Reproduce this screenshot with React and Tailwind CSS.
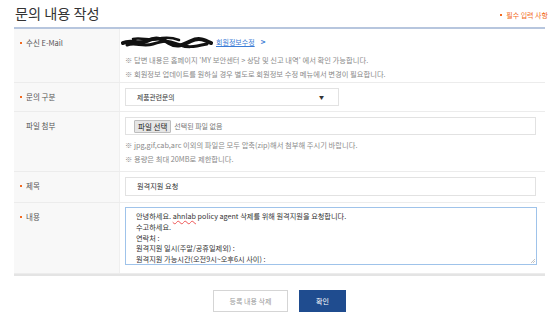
const Dot = () => <span className="inline-block w-[2px] h-[2px] bg-[#f26a21] mr-[4px] align-middle relative -top-[1px]" />;

function Row({ label, required, height, children }) {
  return (
    <div className="flex border-b border-[#ececec]" style={{ height }}>
      <div className="w-[106px] shrink-0 bg-[#f8f8f8] border-r border-[#efefef] pl-[6px] pt-[9px] text-[7.5px] leading-[10px] text-[#555]">
        {required ? <Dot /> : <span className="inline-block w-[6px]" />}
        {label}
      </div>
      <div className="flex-1 pl-[5px]">{children}</div>
    </div>
  );
}

function Note({ children }) {
  return <p className="text-[7.3px] leading-[14px] text-[#8a8a8a] whitespace-nowrap">※ {children}</p>;
}

function Scribble() {
  return (
    <svg width="92" height="14" viewBox="0 0 92 14" className="shrink-0">
      <path d="M2 8 C10 4 18 10 26 6 S40 3 48 8 S62 10 70 6 S84 5 90 8" stroke="#111" strokeWidth="4" fill="none" strokeLinecap="round" />
      <path d="M6 10 C14 7 22 12 32 9 S46 5 56 9 S72 12 86 9" stroke="#111" strokeWidth="3" fill="none" strokeLinecap="round" />
      <path d="M12 4 C20 2 28 6 36 4 S50 2 58 5" stroke="#111" strokeWidth="2.5" fill="none" strokeLinecap="round" />
    </svg>
  );
}

export default function App() {
  return (
    <div className="w-[550px] h-[314px] overflow-hidden bg-white font-['Noto_Sans_CJK_KR','Noto_Sans',sans-serif] text-[#444]">
      <div className="pl-[14px] pr-[5px]">
        {/* header */}
        <div className="h-[27px] flex items-start justify-between">
          <h2 className="pt-[4px] pl-[1px] text-[14.2px] leading-[18px] text-[#333]">문의 내용 작성</h2>
          <p className="pt-[10px] -mr-[3px] text-[7px] leading-[10px] text-[#f26a21] whitespace-nowrap">
            <Dot />필수 입력 사항
          </p>
        </div>
        <div className="h-[2px] bg-[#b7c6de]" />

        <Row label="수신 E-Mail" required height={54}>
          <div className="flex items-center h-[14px] mt-[6px] -ml-[4px]">
            <Scribble />
            <a className="ml-[3px] text-[7px] leading-[10px] text-[#3a7bd5] underline">회원정보수정</a>
            <span className="ml-[6px] text-[8px] leading-[10px] text-[#3a7bd5] font-bold">&gt;</span>
          </div>
          <div className="mt-[4px]">
            <Note>답변 내용은 홈페이지 'MY 보안센터 &gt; 상담 및 신고 내역' 에서 확인 가능합니다.</Note>
            <Note>회원정보 업데이트를 원하실 경우 별도로 회원정보 수정 메뉴에서 변경이 필요합니다.</Note>
          </div>
        </Row>

        <Row label="문의 구분" required height={29}>
          <div className="mt-[5px] w-[214px] h-[18px] border border-[#e2e2e2] flex items-center justify-between pl-[11px] pr-[14px] text-[6.8px] text-[#333]">
            <span>제품관련문의</span>
            <span className="text-[5px]">▼</span>
          </div>
        </Row>

        <Row label="파일 첨부" height={60}>
          <div className="mt-[5px] w-[411px] h-[18px] border border-[#e2e2e2] flex items-center pl-[8px]">
            <span className="h-[13px] px-[3px] bg-[#e6e6e6] border border-[#bdbdbd] rounded-[1px] text-[7.5px] leading-[11px] text-[#222]">파일 선택</span>
            <span className="ml-[3px] text-[7px] text-[#777]">선택된 파일 없음</span>
          </div>
          <div className="mt-[3px]">
            <Note>jpg,gif,cab,arc 이외의 파일은 모두 압축(zip)해서 첨부해 주시기 바랍니다.</Note>
            <Note>용량은 최대 20MB로 제한합니다.</Note>
          </div>
        </Row>

        <Row label="제목" required height={31}>
          <div className="mt-[5px] w-[411px] h-[19px] border border-[#e2e2e2] flex items-center pl-[11px] text-[7.2px] text-[#333]">
            원격지원 요청
          </div>
        </Row>

        <div className="border-b-2 border-[#e4e4e4]">
          <Row label="내용" required height={71}>
            <div className="relative mt-[4px] w-[412px] h-[58px] border border-[#9fc3ea] pl-[10px] pt-[3px] text-[7.2px] leading-[10.8px] text-[#333]">
              <p>
                안녕하세요. <span className="underline decoration-wavy decoration-[#e55] decoration-[0.5px]">ahnlab</span> policy agent 삭제를 위해 원격지원을 요청합니다.
              </p>
              <p>수고하세요.</p>
              <p>연락처 :</p>
              <p>원격지원 일시(주말/공휴일제외) :</p>
              <p>원격지원 가능시간(오전9시~오후6시 사이) :</p>
              <svg width="5" height="5" viewBox="0 0 5 5" className="absolute right-[1px] bottom-[1px]">
                <path d="M1 5 L5 1 M3 5 L5 3" stroke="#aaa" strokeWidth="0.7" />
              </svg>
            </div>
          </Row>
        </div>

        <div className="flex justify-center gap-[11px] mt-[14px]">
          <button className="w-[75px] h-[22px] border border-[#d5d5d5] bg-white text-[7px] text-[#999]">등록 내용 삭제</button>
          <button className="w-[47px] h-[22px] bg-[#1f4c8f] text-[7px] text-white">확인</button>
        </div>
      </div>
    </div>
  );
}
